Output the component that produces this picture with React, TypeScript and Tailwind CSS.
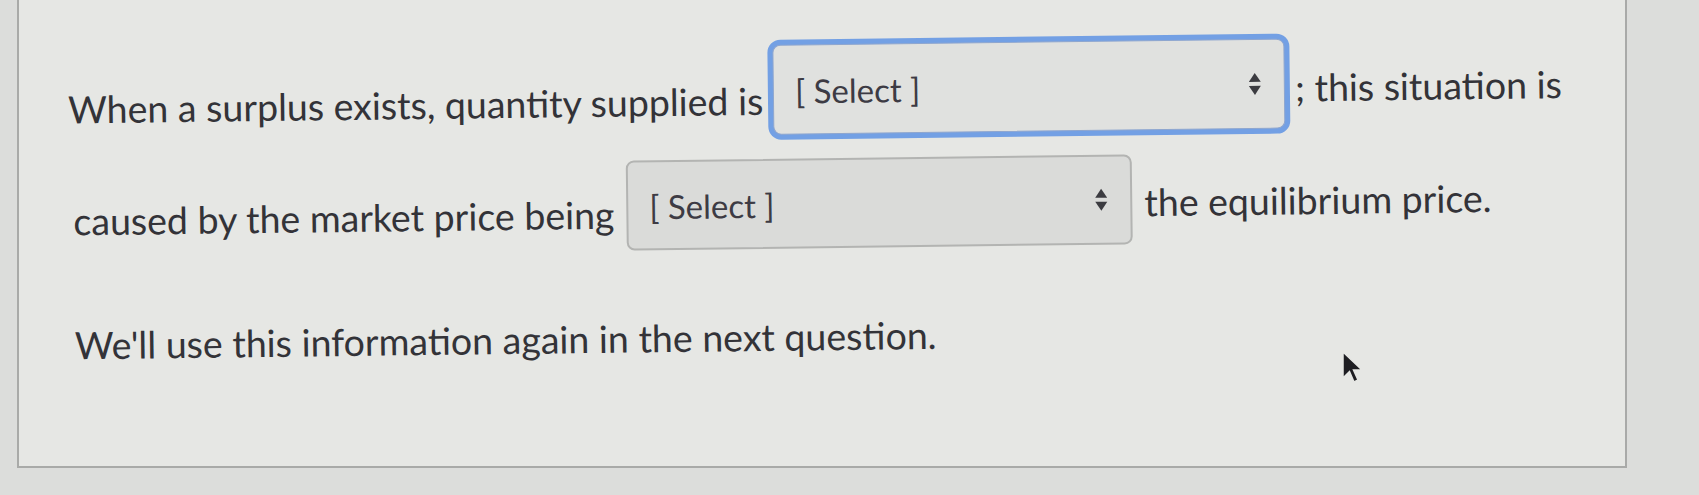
import React from 'react';

const Arrows: React.FC = () => (
  <svg width="14" height="24" viewBox="0 0 14 24" className="shrink-0">
    <path d="M7 1 L13 10 L1 10 Z" fill="#3b3b40" />
    <path d="M1 14 L13 14 L7 23 Z" fill="#3b3b40" />
  </svg>
);

const SelectBox: React.FC<{ focused?: boolean; width: string }> = ({ focused, width }) => (
  <span
    className={`inline-flex items-center justify-between h-[90px] ${width} rounded-[8px] pl-[21px] pr-[22px] ${
      focused
        ? 'bg-[#e0e1df] border border-[#8ea6cf] ring-[5px] ring-[#73a0e4]'
        : 'bg-[#dadbd9] border-2 border-[#b3b4b2]'
    }`}
  >
    <span className="text-[33px] text-[#3d3b44] pt-[4px]">[ Select ]</span>
    <Arrows />
  </span>
);

export default function App() {
  return (
    <div className="w-[1699px] h-[495px] overflow-hidden bg-[#dcdddb] font-['Lato','Open_Sans',sans-serif]">
      <div className="relative w-[1610px] h-[468px] ml-[17px] bg-[#e6e7e4] border-l-2 border-r-2 border-b-2 border-[#a9aaa8]">
        <div className="pl-[50px] pt-[54px] text-[37.5px] text-[#333338] origin-left -rotate-[0.7deg]">
          <div className="flex items-center gap-[10px]">
            <span className="pt-[22px]">When a surplus exists, quantity supplied is</span>
            <SelectBox focused width="w-[512px]" />
            <span className="pt-[8px]">; this situation is</span>
          </div>
          <div className="flex items-center gap-[12px] mt-[24px] pl-[4px]">
            <span className="pt-[18px]">caused by the market price being</span>
            <SelectBox width="w-[506px]" />
            <span className="pt-[6px]">the equilibrium price.</span>
          </div>
          <p className="mt-[60px] pl-[4px]">We'll use this information again in the next question.</p>
        </div>
        <svg
          width="24"
          height="36"
          viewBox="0 0 24 36"
          className="absolute left-[1322px] top-[350px]"
        >
          <path d="M2 2 L2 28 L8.5 21.5 L13 32 L17 30 L12.5 20 L21 20 Z" fill="#1e1e22" stroke="#e6e7e4" strokeWidth="1.5" />
        </svg>
      </div>
    </div>
  );
}
